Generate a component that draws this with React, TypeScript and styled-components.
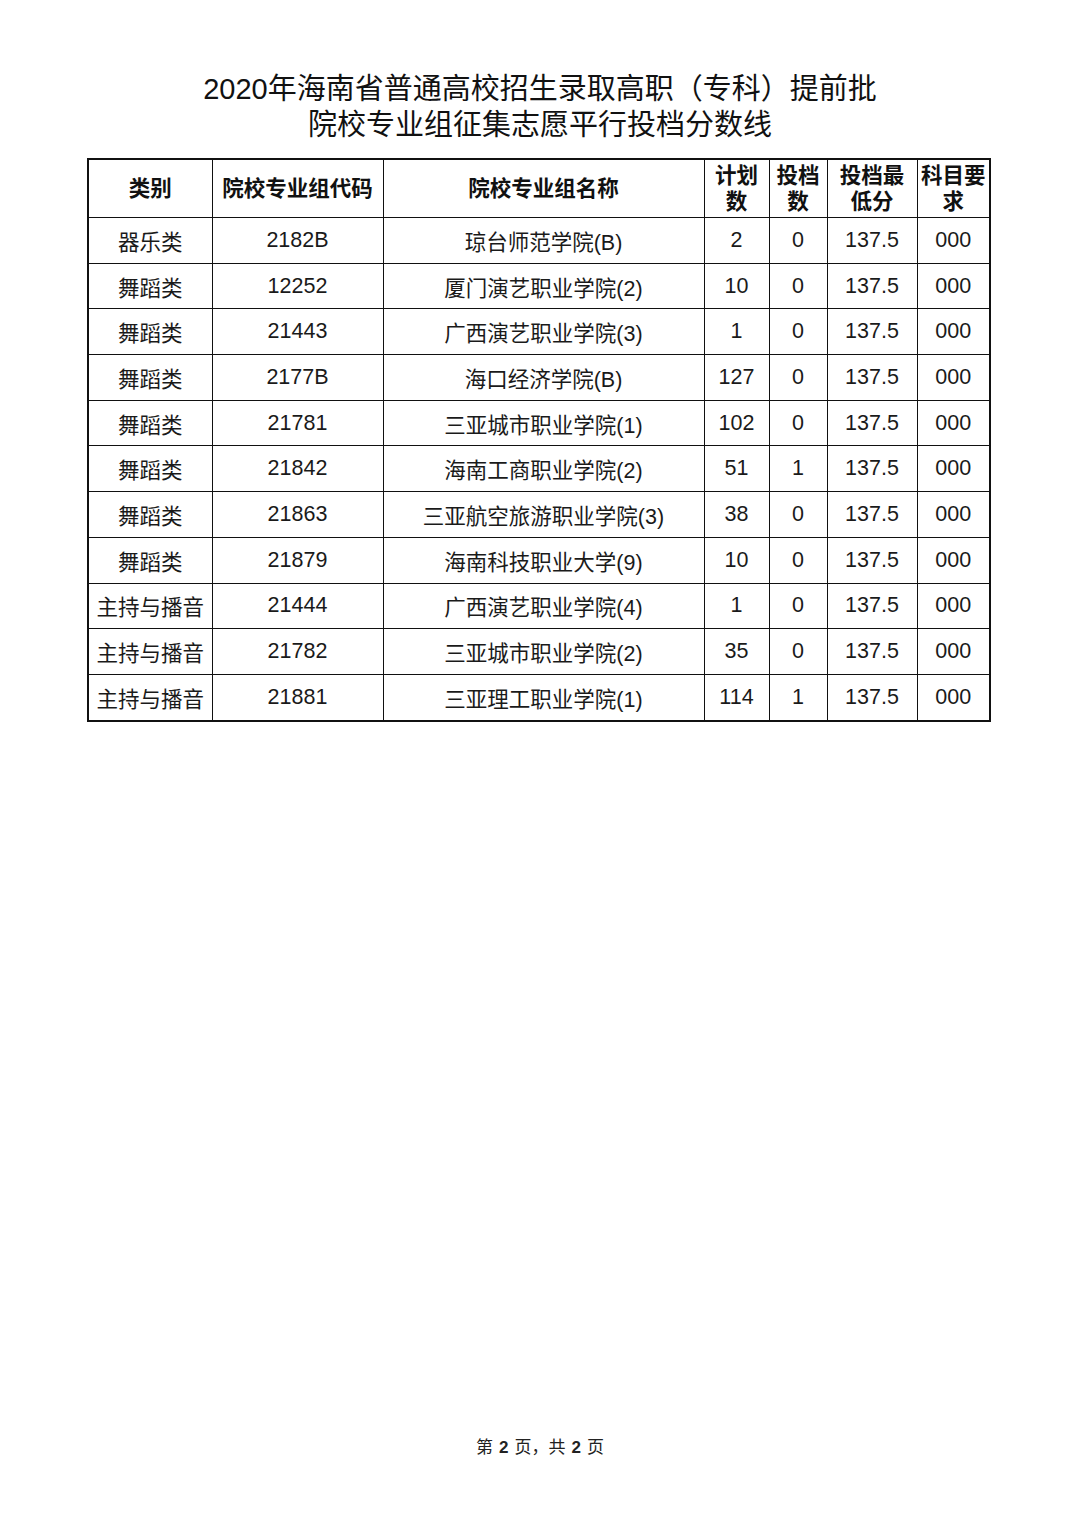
import React from "react";
import styled, { createGlobalStyle } from "styled-components";

const Global = createGlobalStyle`
  html, body { margin: 0; padding: 0; background: #fff; }
  body { font-family: "Liberation Sans", "Noto Sans CJK SC", sans-serif; color: #111; }
`;

const Page = styled.div`
  width: 1080px;
  height: 1526px;
  display: flex;
  flex-direction: column;
  align-items: center;
  background: #fff;
`;

const Title = styled.h1`
  margin: 71px 0 0;
  font-weight: 400;
  font-size: 29px;
  line-height: 36px;
  text-align: center;
  color: #111;
  font-family: "Liberation Sans", "Noto Sans CJK SC", sans-serif;
`;

const Table = styled.table`
  margin-top: 15px;
  width: 902px;
  margin-left: -2px;
  border-collapse: collapse;
  table-layout: fixed;
  border: 2px solid #111;
`;

const Th = styled.th`
  border: 1.5px solid #111;
  height: 57px;
  padding: 0;
  font-weight: 700;
  font-size: 21.5px;
  line-height: 26px;
  text-align: center;
  vertical-align: middle;
  color: #111;
`;

const Td = styled.td`
  border: 1.5px solid #111;
  height: 44.7px;
  padding: 0;
  font-size: 21.5px;
  text-align: center;
  vertical-align: middle;
  color: #1a1a1a;
  white-space: nowrap;
`;

const Spacer = styled.div`
  flex: 1;
`;

const Footer = styled.div`
  margin-bottom: 68px;
  font-family: "Liberation Serif", "Noto Sans CJK SC", serif;
  font-size: 17px;
  color: #222;
`;

const Num = styled.span`
  font-family: "Liberation Sans", sans-serif;
  font-weight: 700;
  margin: 0 6px;
`;

const widths = [124, 171, 321, 65, 58, 90, 73];
const headers: React.ReactNode[] = [
  "类别",
  "院校专业组代码",
  "院校专业组名称",
  <>计划<br />数</>,
  <>投档<br />数</>,
  <>投档最<br />低分</>,
  <>科目要<br />求</>,
];

const rows: string[][] = [
  ["器乐类", "2182B", "琼台师范学院(B)", "2", "0", "137.5", "000"],
  ["舞蹈类", "12252", "厦门演艺职业学院(2)", "10", "0", "137.5", "000"],
  ["舞蹈类", "21443", "广西演艺职业学院(3)", "1", "0", "137.5", "000"],
  ["舞蹈类", "2177B", "海口经济学院(B)", "127", "0", "137.5", "000"],
  ["舞蹈类", "21781", "三亚城市职业学院(1)", "102", "0", "137.5", "000"],
  ["舞蹈类", "21842", "海南工商职业学院(2)", "51", "1", "137.5", "000"],
  ["舞蹈类", "21863", "三亚航空旅游职业学院(3)", "38", "0", "137.5", "000"],
  ["舞蹈类", "21879", "海南科技职业大学(9)", "10", "0", "137.5", "000"],
  ["主持与播音", "21444", "广西演艺职业学院(4)", "1", "0", "137.5", "000"],
  ["主持与播音", "21782", "三亚城市职业学院(2)", "35", "0", "137.5", "000"],
  ["主持与播音", "21881", "三亚理工职业学院(1)", "114", "1", "137.5", "000"],
];

export default function App() {
  return (
    <>
      <Global />
      <Page>
        <Title>
          2020年海南省普通高校招生录取高职（专科）提前批
          <br />
          院校专业组征集志愿平行投档分数线
        </Title>
        <Table>
          <colgroup>
            {widths.map((w, i) => (
              <col key={i} style={{ width: w }} />
            ))}
          </colgroup>
          <thead>
            <tr>
              {headers.map((h, i) => (
                <Th key={i}>{h}</Th>
              ))}
            </tr>
          </thead>
          <tbody>
            {rows.map((r, i) => (
              <tr key={i}>
                {r.map((c, j) => (
                  <Td key={j}>{c}</Td>
                ))}
              </tr>
            ))}
          </tbody>
        </Table>
        <Spacer />
        <Footer>
          第<Num>2</Num>页，共<Num>2</Num>页
        </Footer>
      </Page>
    </>
  );
}
